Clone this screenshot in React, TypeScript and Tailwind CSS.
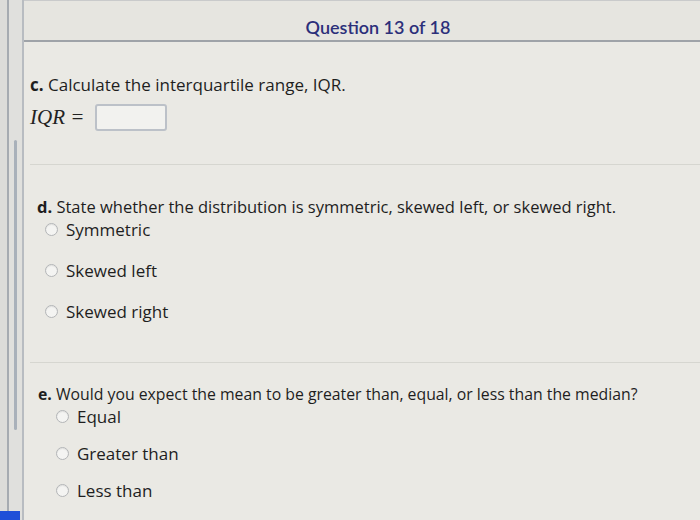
import React from "react";

const sans = { fontFamily: '"Open Sans", "Noto Sans", sans-serif' };

function Radio({ label }: { label: string }) {
  return (
    <div className="flex items-center gap-[8px] h-[24px]">
      <span className="w-[13px] h-[13px] rounded-full border border-[#b3b5b7] bg-[#f4f4f2] shadow-[inset_0_1px_1px_rgba(0,0,0,0.08)]" />
      <span className="text-[17px] text-[#1e1e1e] leading-[24px]">{label}</span>
    </div>
  );
}

export default function App() {
  return (
    <div className="relative w-[700px] h-[520px] overflow-hidden flex bg-[#e9e8e3]" style={sans}>
      {/* left gutter */}
      <div className="flex w-[22px] shrink-0">
        <div className="w-[9px] bg-[#dcdcd9] border-r-2 border-[#a6abb1]" />
        <div className="flex-1 bg-[#e0e0dd] flex flex-col items-center pt-[140px]">
          <div className="w-[3px] h-[290px] rounded bg-[#a9b1ba]" />
        </div>
      </div>
      <div className="absolute left-0 bottom-0 w-[20px] h-[9px] bg-[#1f4fd8]" />

      {/* main */}
      <div className="flex-1 flex flex-col border-l-2 border-[#b8bcc1]">
        <div className="h-[42px] shrink-0 flex items-end justify-center pl-[32px] pb-[1px] bg-[#e6e5e0] border-t border-[#c9cacb] border-b-2 border-b-[#9fa3a8]">
          <span className="text-[18px] leading-[24px] font-semibold text-[#2c2f7a]" style={{ fontFamily: 'Lato, "Noto Sans", sans-serif' }}>
            Question 13 of 18
          </span>
        </div>

        <div className="flex-1 flex flex-col pl-[6px] pr-0 bg-[#eae9e4]">
          {/* c */}
          <div className="pt-[31px] pb-[30px] border-b border-[#d6d6d0]">
            <div className="text-[17px] leading-[24px] text-[#1e1e1e]">
              <span className="font-bold">c.</span> Calculate the interquartile range, IQR.
            </div>
            <div className="flex items-center gap-[11px] mt-[5px]">
              <span className="text-[21px] italic text-[#222]" style={{ fontFamily: '"Liberation Serif", serif' }}>
                IQR =
              </span>
              <span className="w-[72px] h-[27px] rounded-[3px] border-2 border-[#bcc1c8] bg-[#f2f2ef]" />
            </div>
          </div>

          {/* d */}
          <div className="pt-[30px] pb-[38px] pl-[7px] border-b border-[#d6d6d0]">
            <div className="text-[16.5px] leading-[24px] text-[#1e1e1e]">
              <span className="font-bold">d.</span> State whether the distribution is symmetric, skewed left, or skewed right.
            </div>
            <div className="flex flex-col gap-[17px] -mt-[1px] pl-[8px]">
              <Radio label="Symmetric" />
              <Radio label="Skewed left" />
              <Radio label="Skewed right" />
            </div>
          </div>

          {/* e */}
          <div className="pt-[19px] pl-[8px]">
            <div className="text-[15.8px] leading-[24px] text-[#1e1e1e]">
              <span className="font-bold">e.</span> Would you expect the mean to be greater than, equal, or less than the median?
            </div>
            <div className="flex flex-col gap-[13px] -mt-[1px] pl-[18px]">
              <Radio label="Equal" />
              <Radio label="Greater than" />
              <Radio label="Less than" />
            </div>
          </div>
        </div>
      </div>
    </div>
  );
}
